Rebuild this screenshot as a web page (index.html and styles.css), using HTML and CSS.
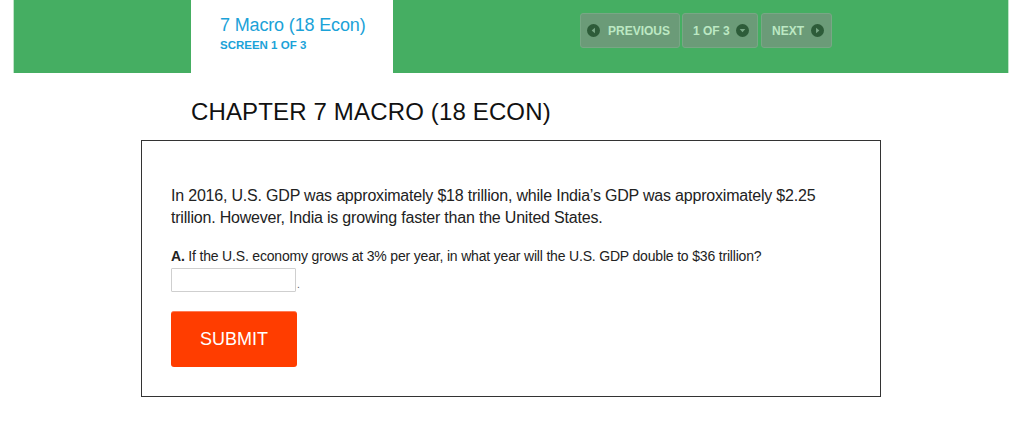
FILE: index.html
```html
<!DOCTYPE html>
<html lang="en">
<head>
<meta charset="utf-8">
<title>7 Macro (18 Econ)</title>
<link rel="stylesheet" href="styles.css">
</head>
<body>
<header class="topbar">
  <div class="spacer"></div>
  <div class="tab">
    <div class="tab-title">7 Macro (18 Econ)</div>
    <div class="tab-sub">SCREEN 1 OF 3</div>
  </div>
  <nav class="pager">
    <a class="pbtn prev">
      <svg class="ico" viewBox="0 0 12 12" width="13" height="13"><circle cx="6" cy="6" r="6" fill="#2d5c39"/><path d="M7.3 3.4 L4.3 6 L7.3 8.6 Z" fill="#7aa887"/></svg>
      <span>PREVIOUS</span>
    </a>
    <a class="pbtn count">
      <span>1 OF 3</span>
      <svg class="ico" viewBox="0 0 12 12" width="13" height="13"><circle cx="6" cy="6" r="6" fill="#2d5c39"/><path d="M3.4 4.7 L8.6 4.7 L6 7.7 Z" fill="#7aa887"/></svg>
    </a>
    <a class="pbtn next">
      <span>NEXT</span>
      <svg class="ico" viewBox="0 0 12 12" width="13" height="13"><circle cx="6" cy="6" r="6" fill="#2d5c39"/><path d="M4.7 3.4 L7.7 6 L4.7 8.6 Z" fill="#7aa887"/></svg>
    </a>
  </nav>
</header>

<main class="content">
  <h1 class="chapter">CHAPTER 7 MACRO (18 ECON)</h1>
  <section class="card">
    <p class="intro">In 2016, U.S. GDP was approximately $18 trillion, while India’s GDP was approximately $2.25 trillion. However, India is growing faster than the United States.</p>
    <p class="question"><b>A.</b> If the U.S. economy grows at 3% per year, in what year will the U.S. GDP double to $36 trillion?</p>
    <div class="answer"><input class="field" type="text"><span class="dot">.</span></div>
    <button class="submit" type="button">SUBMIT</button>
  </section>
</main>
</body>
</html>
```

FILE: styles.css
```css
html, body {
  margin: 0;
  padding: 0;
  background: #fff;
}
body {
  font-family: "Liberation Sans", Arial, Helvetica, sans-serif;
  color: #222;
}

.topbar {
  display: flex;
  margin-left: 13px;
  width: 996px;
  height: 73px;
  box-sizing: border-box;
  background: #45ae62;
  border-left: 1px solid #bfe4c8;
  border-right: 1px solid #bfe4c8;
}
.spacer {
  width: 177px;
  flex: none;
}
.tab {
  width: 202px;
  flex: none;
  background: #fff;
  box-sizing: border-box;
  padding: 14px 0 0 29px;
  color: #1ba2d8;
}
.tab-title {
  font-size: 18px;
  line-height: 22px;
  letter-spacing: -0.15px;
}
.tab-sub {
  margin-top: 2px;
  font-size: 11.5px;
  line-height: 14px;
  font-weight: bold;
}

.pager {
  display: flex;
  align-items: flex-start;
  gap: 2px;
  margin-left: 187px;
  padding-top: 13px;
}
.pbtn {
  display: flex;
  align-items: center;
  height: 35px;
  box-sizing: border-box;
  background: #6b9b78;
  border: 1px solid #78a785;
  border-radius: 3px;
  color: #bce8c3;
  font-size: 12px;
  font-weight: bold;
  gap: 8px;
}
.pbtn.prev {
  width: 100px;
  padding-left: 6px;
}
.pbtn.count {
  width: 76px;
  padding-left: 10px;
  gap: 6px;
}
.pbtn.next {
  width: 71px;
  padding-left: 10px;
  gap: 7px;
  margin-left: 1px;
}
.ico {
  display: block;
  flex: none;
}

.content {
  width: 740px;
  margin-left: 141px;
}
.chapter {
  margin: 25px 0 14px 50px;
  font-size: 24px;
  line-height: 28px;
  font-weight: normal;
  letter-spacing: 0.15px;
  color: #111;
}
.card {
  box-sizing: border-box;
  height: 257px;
  border: 1px solid #333;
  padding: 44px 29px 0 29px;
}
.intro {
  margin: 0;
  font-size: 16px;
  line-height: 22px;
  letter-spacing: -0.2px;
  color: #222;
}
.question {
  margin: 19px 0 0;
  font-size: 14px;
  line-height: 16px;
  letter-spacing: -0.18px;
  color: #222;
}
.question b {
  font-weight: bold;
}
.answer {
  margin-top: 4px;
  display: flex;
  align-items: flex-end;
  height: 24px;
}
.field {
  width: 125px;
  height: 24px;
  box-sizing: border-box;
  border: 1px solid #cfcfcf;
  border-radius: 1px;
  margin: 0;
  padding: 0 4px;
  background: #fff;
}
.dot {
  font-size: 10px;
  line-height: 14px;
  margin-left: 1px;
  color: #555;
}
.submit {
  display: block;
  margin-top: 19px;
  width: 126px;
  height: 56px;
  border: 0;
  border-top: 1px solid #ff7b55;
  border-radius: 3px;
  background: #ff3d00;
  color: #fff;
  font-family: "Liberation Sans", Arial, sans-serif;
  font-size: 18px;
  padding: 0;
}
```
